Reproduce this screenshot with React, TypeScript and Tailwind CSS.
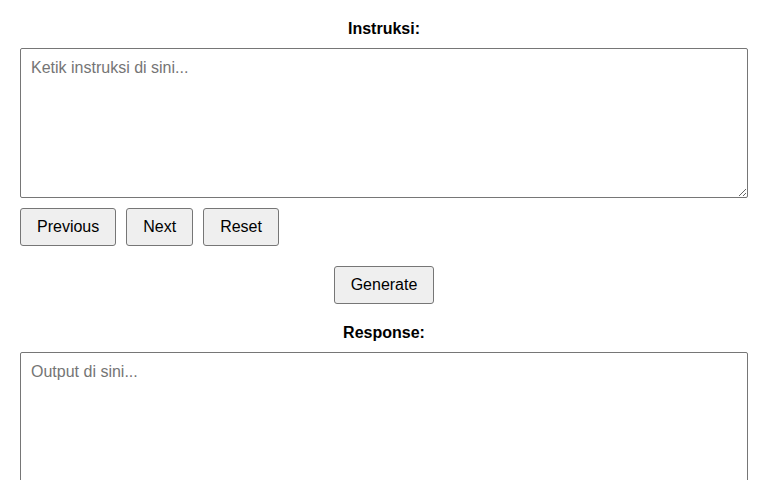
export default function App() {
  const btn =
    "h-[38px] px-4 text-[16px] leading-[18px] text-black bg-[#efefef] border border-[#767676] rounded-[3px]";
  const area =
    "block w-full h-[150px] p-[10px] text-[16px] leading-[18px] border border-[#767676] rounded-[2px] placeholder:text-[#757575] resize-y outline-none";
  return (
    <div className="font-['Liberation_Sans',Arial,sans-serif] bg-white p-5 text-black">
      <label className="block text-center font-bold text-[16px] leading-[18px] mb-[10px]">
        Instruksi:
      </label>
      <textarea placeholder="Ketik instruksi di sini..." className={area} />
      <div className="flex gap-[10px] mt-[10px]">
        <button className={btn}>Previous</button>
        <button className={btn}>Next</button>
        <button className={btn}>Reset</button>
      </div>
      <div className="flex justify-center mt-5">
        <button className={btn}>Generate</button>
      </div>
      <label className="block text-center font-bold text-[16px] leading-[18px] mt-5 mb-[10px]">
        Response:
      </label>
      <textarea placeholder="Output di sini..." className={area} />
    </div>
  );
}
